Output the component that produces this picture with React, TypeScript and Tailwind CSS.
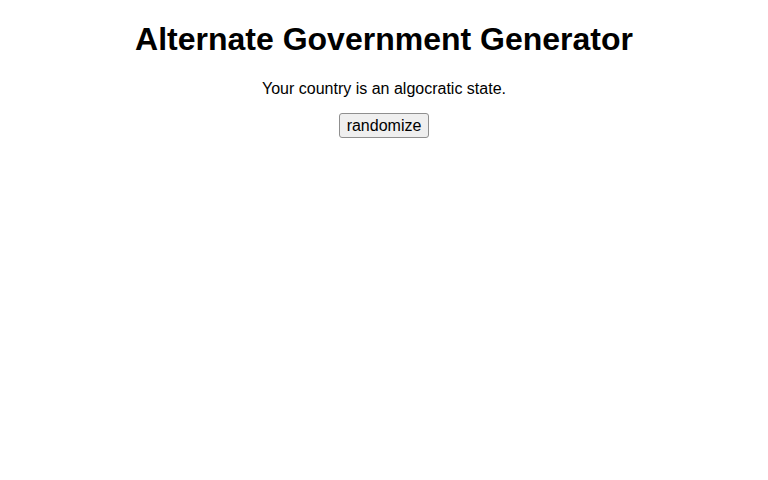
import { useState } from "react";

const kinds = [
  "an algocratic state",
  "a technocracy",
  "a stratocracy",
  "a geniocracy",
  "a kritarchy",
  "a noocracy",
];

export default function App() {
  const [kind, setKind] = useState(kinds[0]);

  const randomize = () => {
    setKind(kinds[Math.floor(Math.random() * kinds.length)]);
  };

  return (
    <div className="min-h-screen bg-white text-center text-black font-['Liberation_Sans',Arial,sans-serif]">
      <h1 className="pt-[21px] text-[32px] font-bold leading-[37px]">
        Alternate Government Generator
      </h1>
      <p className="mt-[22px] text-base leading-[18px]">
        Your country is {kind}.
      </p>
      <div className="mt-[15px]">
        <button
          onClick={randomize}
          className="rounded-[3px] border border-[#8f8f8f] bg-[#efefef] px-[7px] py-[2px] text-base leading-[19px] text-black hover:bg-[#e5e5e5]"
        >
          randomize
        </button>
      </div>
    </div>
  );
}
